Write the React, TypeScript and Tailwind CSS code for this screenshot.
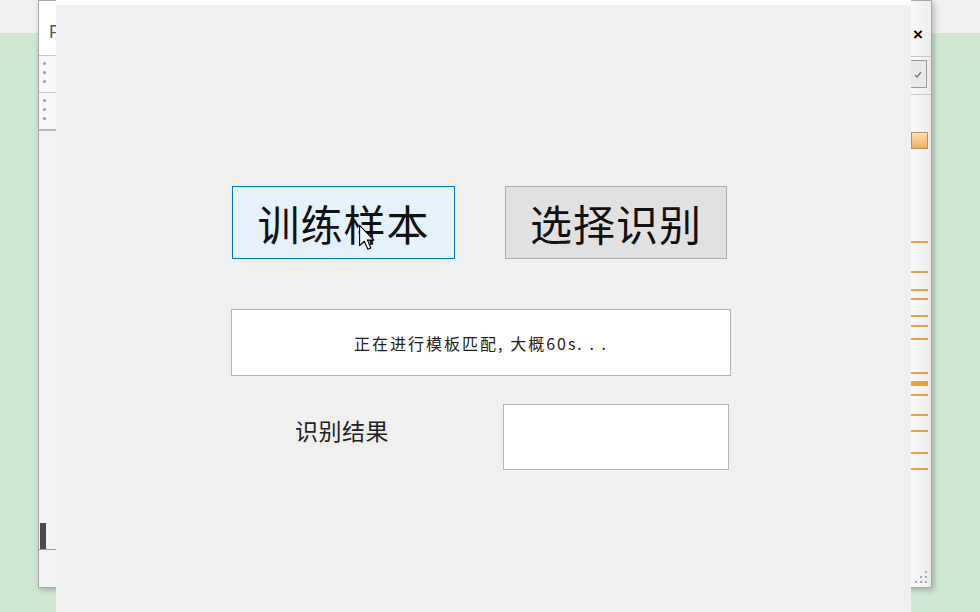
import React from 'react'

const ticks = [241, 271, 289, 298, 315, 325, 338, 372, 394, 414, 430, 452, 468]

const Cursor: React.FC = () => (
  <svg width="20" height="28" viewBox="0 0 14 20" className="absolute left-[358px] top-[224px]">
    <path
      d="M1 1 L1 15.5 L4.4 12.3 L6.9 18 L9 17.1 L6.6 11.5 L11.2 11.5 Z"
      fill="#ffffff"
      stroke="#000000"
      strokeWidth="0.8"
      strokeLinejoin="round"
    />
  </svg>
)

// window behind the dialog, only its edges show
const BackWindow: React.FC = () => (
  <div className="absolute left-[38px] top-0 w-[894px] h-[588px] bg-[#f8f8f9] border border-[#a9a9a9] shadow-[2px_2px_6px_rgba(0,0,0,0.25)]">
    {/* left strip */}
    <div className="absolute left-0 top-0 w-[18px] h-full flex flex-col">
      <div className="h-[55px] border-b border-[#c8c8c8] bg-white relative">
        <span className="absolute left-[10px] top-[22px] text-[18px] leading-none text-[#555] font-['Liberation_Sans',sans-serif]">F</span>
      </div>
      <div className="h-[37px] border-b border-[#c8c8c8] flex flex-col gap-[6px] pl-[4px] pt-[6px]">
        <span className="w-[3px] h-[3px] bg-[#9a9a9a] rounded-full" />
        <span className="w-[3px] h-[3px] bg-[#9a9a9a] rounded-full" />
        <span className="w-[3px] h-[3px] bg-[#9a9a9a] rounded-full" />
      </div>
      <div className="h-[38px] border-b-2 border-[#b8b8b8] flex flex-col gap-[6px] pl-[4px] pt-[6px]">
        <span className="w-[3px] h-[3px] bg-[#9a9a9a] rounded-full" />
        <span className="w-[3px] h-[3px] bg-[#9a9a9a] rounded-full" />
        <span className="w-[3px] h-[3px] bg-[#9a9a9a] rounded-full" />
      </div>
      <div className="flex-1 bg-[#f3f3f5] relative">
        <div className="absolute left-[1px] top-[392px] w-[6px] h-[26px] bg-[#4a4a4a]" />
        <div className="absolute left-0 top-[418px] w-full h-px bg-[#9a9a9a]" />
      </div>
    </div>

    {/* right strip */}
    <div className="absolute right-0 top-0 w-[21px] h-full bg-gradient-to-r from-[#fbfbfc] to-[#ececef]">
      <span className="absolute left-[3px] top-[25px] text-[17px] font-bold leading-none text-black font-['Liberation_Sans',sans-serif]">×</span>
      <div className="absolute left-0 top-[55px] w-full h-px bg-[#c8c8c8]" />
      <div className="absolute left-[-1px] top-[59px] w-[18px] h-[28px] border border-[#9a9a9a] bg-[#e9e9e9] flex items-center justify-center">
        <svg width="10" height="8" viewBox="0 0 10 8">
          <path d="M2 5 L4 7 L8 2" fill="none" stroke="#777" strokeWidth="1.3" />
        </svg>
      </div>
      <div className="absolute left-0 top-[93px] w-full h-px bg-[#c8c8c8]" />
      <div className="absolute left-[1px] top-[131px] w-[17px] h-[17px] border border-[#b59066] bg-gradient-to-b from-[#fde0b0] to-[#f4ae5a]" />
      {ticks.map((y) => (
        <div key={y} className="absolute left-[1px] w-[17px] h-[2px] bg-[#e6a24a]" style={{ top: y - 1 }} />
      ))}
      <div className="absolute left-[1px] top-[380px] w-[17px] h-[5px] bg-[#eda235]" />
      <div className="absolute right-[4px] bottom-[4px] grid grid-cols-3 gap-[3px]">
        <span />
        <span />
        <span className="w-[2px] h-[2px] bg-[#aaa]" />
        <span />
        <span className="w-[2px] h-[2px] bg-[#aaa]" />
        <span className="w-[2px] h-[2px] bg-[#aaa]" />
        <span className="w-[2px] h-[2px] bg-[#aaa]" />
        <span className="w-[2px] h-[2px] bg-[#aaa]" />
        <span className="w-[2px] h-[2px] bg-[#aaa]" />
      </div>
    </div>
  </div>
)

const Dialog: React.FC = () => (
  <div className="absolute left-[56px] top-0 w-[855px] h-[612px] bg-[#f0f0f0] flex flex-col font-['Noto_Sans_CJK_SC','Microsoft_YaHei',sans-serif]">
    <div className="h-[5px] bg-white" />
    <div className="flex flex-col items-start pl-[175px] pt-[181px]">
      {/* buttons */}
      <div className="flex gap-[50px] pl-px">
        <button className="w-[223px] h-[73px] bg-[#e5f1fb] border border-[#0078d7] text-[42px] tracking-[1px] leading-none text-[#111] flex items-center justify-center">
          训练样本
        </button>
        <button className="w-[222px] h-[73px] bg-[#e1e1e1] border border-[#adadad] text-[42px] tracking-[1px] leading-none text-[#111] flex items-center justify-center">
          选择识别
        </button>
      </div>

      {/* status */}
      <div className="mt-[50px] w-[500px] h-[67px] bg-white border border-[#b4b4b4] flex items-center justify-center text-[16px] text-[#222] tracking-[2px]">
        正在进行模板匹配, 大概60s. . .
      </div>

      {/* result */}
      <div className="mt-[28px] flex items-start">
        <span className="ml-[64px] mt-[15px] w-[208px] text-[23px] tracking-[0.5px] leading-none text-[#222]">识别结果</span>
        <div className="w-[226px] h-[66px] bg-white border border-[#b4b4b4]" />
      </div>
    </div>
  </div>
)

export default function App() {
  return (
    <div className="relative w-[980px] h-[612px] overflow-hidden flex flex-col">
      <div className="h-[33px] bg-[#f0f0f0]" />
      <div className="flex-1 bg-[#cfe8d2]" />
      <BackWindow />
      <Dialog />
      <Cursor />
    </div>
  )
}
